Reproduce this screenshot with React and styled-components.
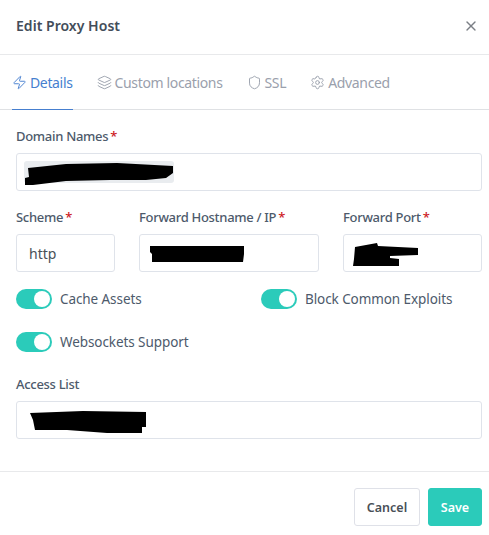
import React from "react";
import styled, { createGlobalStyle } from "styled-components";
import { Zap, Layers, Shield, Settings, X } from "lucide-react";

const Global = createGlobalStyle`
  html, body { margin: 0; padding: 0; background: #fff; }
  body { font-family: "Noto Sans", "Open Sans", sans-serif; color: #4d5a6b; }
  * { box-sizing: border-box; }
`;

const Modal = styled.div`
  width: 489px;
  height: 535px;
  background: #fff;
  display: flex;
  flex-direction: column;
`;
const Header = styled.header`
  height: 55px;
  padding: 0 10px 3px 16px;
  border-bottom: 1px solid #e8e9eb;
  display: flex;
  align-items: center;
  justify-content: space-between;
`;
const Title = styled.h2`
  margin: 0;
  font-size: 14px;
  font-weight: 600;
  letter-spacing: 0.03px;
  color: #434d5a;
`;
const Close = styled.button`
  border: 0;
  background: none;
  padding: 0;
  display: flex;
  color: #7b7f85;
`;
const Tabs = styled.nav`
  height: 55px;
  padding: 0 16px 0 12px;
  border-bottom: 1px solid #dfe1e4;
  display: flex;
  align-items: stretch;
  gap: 24px;
`;
const Tab = styled.a`
  display: flex;
  align-items: center;
  gap: 3px;
  margin-bottom: -1px;
  font-size: 14px;
  letter-spacing: -0.35px;
  color: ${(p) => (p.$active ? "#467fcf" : "#9aa0ac")};
  border-bottom: 1px solid ${(p) => (p.$active ? "#467fcf" : "transparent")};
`;
const Body = styled.div`
  flex: 1;
  padding: 17px 7px 0 16px;
  display: flex;
  flex-direction: column;
`;
const Field = styled.div`
  display: flex;
  flex-direction: column;
  min-width: 0;
`;
const Label = styled.label`
  font-size: 13px;
  font-weight: 500;
  letter-spacing: -0.3px;
  line-height: 18px;
  height: 18px;
  margin-bottom: ${(p) => p.$gap || 0}px;
  color: #4d5a6b;
`;
const Req = styled.span`
  color: #cd201f;
  margin-left: 2px;
`;
const Input = styled.div`
  position: relative;
  height: 38px;
  border: 1px solid #dfe3ea;
  border-radius: 3px;
  background: #fff;
  display: flex;
  align-items: center;
  padding: 0 12px;
  font-size: 14px;
  color: #495057;
`;
const Chip = styled.span`
  width: 150px;
  height: 22px;
  margin-left: -5px;
  border-radius: 3px;
  background: #e9ecef;
`;
const Redaction = styled.svg`
  position: absolute;
  left: -1px;
  top: -1px;
  overflow: visible;
  pointer-events: none;
`;
const Row = styled.div`
  margin-top: 17px;
  display: grid;
  grid-template-columns: 99px 180px 139px;
  column-gap: 24px;
`;
const Toggles = styled.div`
  margin-top: 16px;
  display: grid;
  grid-template-columns: 245px 1fr;
  row-gap: 22px;
`;
const ToggleRow = styled.div`
  display: flex;
  align-items: center;
  gap: 8px;
  height: 21px;
  font-size: 13.5px;
  letter-spacing: -0.08px;
  color: #4d5a6b;
`;
const Track = styled.span`
  position: relative;
  width: 36px;
  height: 20px;
  border-radius: 10px;
  background: #2bcbba;
  flex: none;
`;
const Knob = styled.span`
  position: absolute;
  top: 2px;
  right: 2px;
  width: 16px;
  height: 16px;
  border-radius: 50%;
  background: #fff;
`;
const AccessField = styled(Field)`
  margin-top: 23px;
`;
const Footer = styled.footer`
  height: 64px;
  padding: 16px 7px 0 0;
  border-top: 1px solid #e8e9eb;
  display: flex;
  justify-content: flex-end;
  gap: 8px;
`;
const Button = styled.button`
  height: 38px;
  border-radius: 3px;
  padding: 0;
  width: ${(p) => p.$w}px;
  font-family: inherit;
  font-size: 12.5px;
  font-weight: 600;
  border: 1px solid ${(p) => (p.$primary ? "#2bcbba" : "#dfe1e8")};
  background: ${(p) => (p.$primary ? "#2bcbba" : "#fff")};
  color: ${(p) => (p.$primary ? "#fff" : "#495057")};
`;

const Toggle = ({ children }) => (
  <ToggleRow>
    <Track>
      <Knob />
    </Track>
    {children}
  </ToggleRow>
);

const Blot = ({ points }) => (
  <Redaction width="1" height="1">
    <polygon points={points} fill="#000" />
  </Redaction>
);

export default function App() {
  return (
    <Modal>
      <Global />
      <Header>
        <Title>Edit Proxy Host</Title>
        <Close aria-label="Close">
          <X size={16} strokeWidth={2} />
        </Close>
      </Header>
      <Tabs>
        <Tab $active>
          <Zap size={15} strokeWidth={1.5} />
          Details
        </Tab>
        <Tab>
          <Layers size={15} strokeWidth={1.5} />
          Custom locations
        </Tab>
        <Tab>
          <Shield size={15} strokeWidth={1.5} />
          SSL
        </Tab>
        <Tab>
          <Settings size={15} strokeWidth={1.5} />
          Advanced
        </Tab>
      </Tabs>
      <Body>
        <Field>
          <Label $gap={8}>
            Domain Names<Req>*</Req>
          </Label>
          <Input>
            <Chip />
            <Blot points="12,15 50,11 101,10 157,13 157,20 150,25 130,27 94,27 50,28 17,32 9,32 9,25 13,24" />
          </Input>
        </Field>
        <Row>
          <Field>
            <Label $gap={8}>
              Scheme<Req>*</Req>
            </Label>
            <Input>http</Input>
          </Field>
          <Field>
            <Label $gap={8}>
              Forward Hostname / IP<Req>*</Req>
            </Label>
            <Input>
              <Blot points="11,12 105,12 105,20 104,28 13,28 13,20 11,18" />
            </Input>
          </Field>
          <Field>
            <Label $gap={8}>
              Forward Port<Req>*</Req>
            </Label>
            <Input>
              <Blot points="12,13 34,9 35,12 75,14 75,21 47,22 47,24 56,25 56,32 10,32 11,25" />
            </Input>
          </Field>
        </Row>
        <Toggles>
          <Toggle>Cache Assets</Toggle>
          <Toggle>Block Common Exploits</Toggle>
          <Toggle>Websockets Support</Toggle>
        </Toggles>
        <AccessField>
          <Label $gap={8}>Access List</Label>
          <Input>
            <Blot points="14,12 67,10 130,11 130,26 126,26 126,32 91,32 51,29 19,29 17,19" />
          </Input>
        </AccessField>
      </Body>
      <Footer>
        <Button $w={66}>Cancel</Button>
        <Button $primary $w={54}>Save</Button>
      </Footer>
    </Modal>
  );
}
